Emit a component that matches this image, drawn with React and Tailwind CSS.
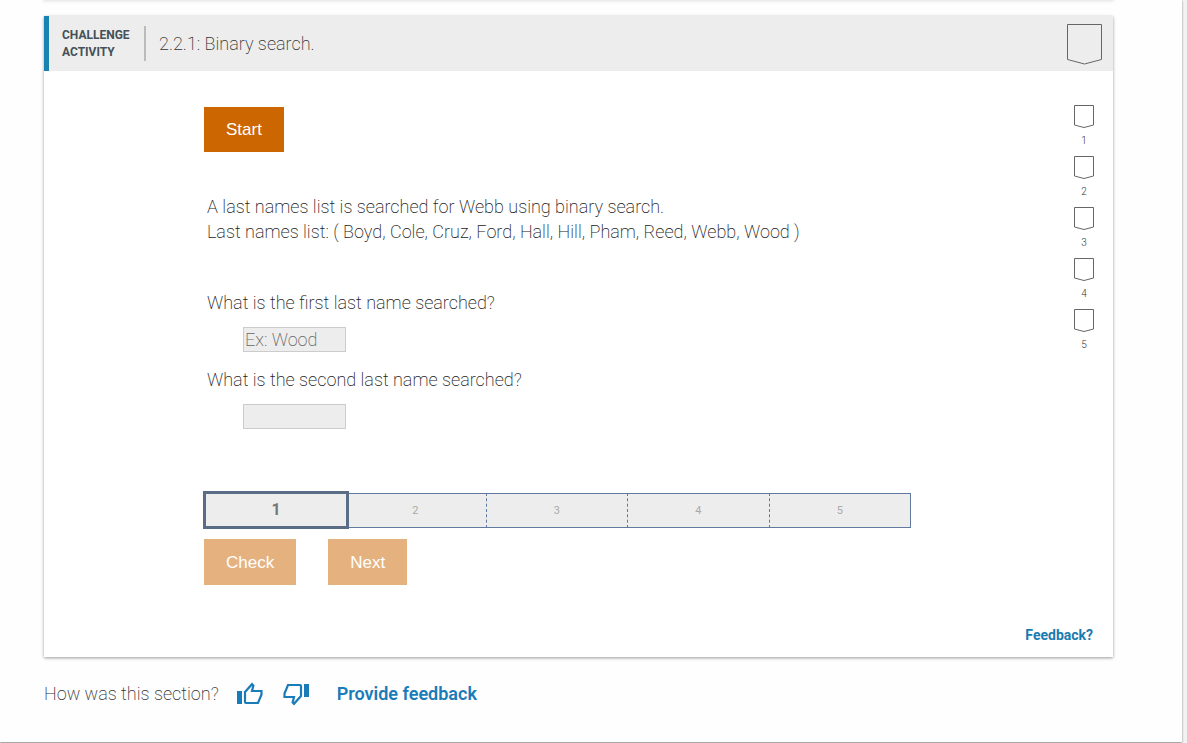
import { useState } from "react";

const LEVELS = [1, 2, 3, 4, 5];

function LargeBadge() {
  return (
    <svg className="h-[42px] w-[35px]" viewBox="0 0 35 42" fill="none" stroke="#666" aria-hidden="true">
      <path d="M.5 1.5H34.500V36.500L17.500 41L.5 36.500Z" />
    </svg>
  );
}

function SmallBadge() {
  return (
    <svg className="h-6 w-5" viewBox="0 0 20 24" fill="none" stroke="#666" aria-hidden="true">
      <path d="M.5 .5H19.500V20L10 22.500L.5 20Z" />
    </svg>
  );
}

function Thumb({ className }) {
  return (
    <svg className={className} viewBox="0 0 26 24" aria-hidden="true">
      <path d="M0 9H5V22H0Z" fill="currentColor" />
      <path
        d="M8 10L15 2.200L16.400 3.600L15 9H24.500V12.500L21 21H9Q8 21 8 20Z"
        fill="none"
        stroke="currentColor"
        strokeWidth="2.200"
      />
    </svg>
  );
}

function Question({ id, label, placeholder }) {
  const [value, setValue] = useState("");
  return (
    <div className="flex flex-col">
      <label htmlFor={id} className="pl-[3px]">
        {label}
      </label>
      <input
        id={id}
        type="text"
        value={value}
        placeholder={placeholder}
        onChange={(event) => setValue(event.target.value)}
        className="mt-3 ml-[39px] h-[25px] w-[103px] border border-[#ccc] bg-[#ededed] px-px placeholder:text-[#666]"
      />
    </div>
  );
}

function Progress({ current }) {
  return (
    <ol className="-ml-px flex max-w-[708px] items-center text-center">
      {LEVELS.map((level) =>
        level === current ? (
          <li
            key={level}
            aria-current="step"
            className="z-10 -mr-1 flex h-[38px] w-[146px] items-center justify-center border-3 border-[#5b6c87] bg-[#ededed] text-base font-bold text-[#777]"
          >
            {level}
          </li>
        ) : (
          <li
            key={level}
            className="flex h-[35px] flex-1 items-center justify-center border-y border-r border-y-[#5f7a9e] border-r-[#5f7a9e] bg-[#ededed] text-[11px] font-normal text-[#aaa] [border-right-style:dashed] last:[border-right-style:solid]"
          >
            {level}
          </li>
        )
      )}
    </ol>
  );
}

export default function App() {
  return (
    <div className="min-h-screen bg-[#f2f2f2] pr-[5px] pb-[2px] font-['Roboto',sans-serif] text-lg leading-[25px] font-extralight text-[#222]">
      <main className="bg-[#fefefe] pr-[69px] pb-9 pl-11 shadow-[0_1px_2px_rgba(0,0,0,0.45)]">
        <div className="flex flex-col gap-4">
          <div className="h-0 shadow-[0_0_3px_1px_rgba(0,0,0,0.15)]" />
          <section className="bg-white shadow-[0_1px_3px_rgba(0,0,0,0.4)]">
            <header className="flex h-[55px] items-center border-l-5 border-[#1a82b0] bg-[#ededed] pr-[11px] pl-[13px]">
              <p className="w-[82px] text-xs leading-[17px] font-bold text-[#455058]">
                CHALLENGE ACTIVITY
              </p>
              <h1 className="flex h-[35px] flex-1 items-center border-l-2 border-[#bbb] pl-[13px] text-[#333]">
                2.2.1: Binary search.
              </h1>
              <LargeBadge />
            </header>

            <div className="flex justify-between pr-[19px] pl-40">
              <div className="flex-1 pt-9">
                <button type="button" className="h-[45px] bg-[#cc6600] px-[22px] font-['Liberation_Sans',sans-serif] text-[17px] font-normal text-white">
                  Start
                </button>
                <p className="mt-[42px] pl-[3px]">
                  A last names list is searched for Webb using binary search.
                  <br />
                  Last names list: ( Boyd, Cole, Cruz, Ford, Hall, Hill, Pham, Reed, Webb, Wood )
                </p>
                <div className="mt-[46px] mb-[62px] flex flex-col gap-[15px]">
                  <Question id="first-name" label="What is the first last name searched?" placeholder="Ex: Wood" />
                  <Question id="second-name" label="What is the second last name searched?" />
                </div>
                <Progress current={1} />
                <div className="mt-[10px] flex gap-8 font-['Liberation_Sans',sans-serif] text-[17px] text-white">
                  <button type="button" className="h-[46px] bg-[#e5b27f] px-[22px] font-normal">
                    Check
                  </button>
                  <button type="button" className="h-[46px] bg-[#e5b27f] px-[22px] font-normal">
                    Next
                  </button>
                </div>
              </div>
              <ol className="flex flex-col gap-[9px] pt-[34px]">
                {LEVELS.map((level) => (
                  <li key={level} className="flex flex-col items-center gap-[6px] text-[10px] leading-3 font-light text-[#333]">
                    <SmallBadge />
                    {level}
                  </li>
                ))}
              </ol>
            </div>

            <div className="flex justify-end pt-[38px] pr-5 pb-[9px]">
              <a href="#feedback" className="text-sm leading-[25px] font-bold text-[#1a7bb0]">
                Feedback?
              </a>
            </div>
          </section>
        </div>

        <footer className="mt-6 flex items-center">
          <span className="text-[#333]">How was this section?</span>
          <button type="button" aria-label="Thumbs up" className="ml-[18px] text-[#1a7bb9]">
            <Thumb className="h-6 w-[26px]" />
          </button>
          <button type="button" aria-label="Thumbs down" className="ml-5 text-[#1a7bb9]">
            <Thumb className="h-6 w-[26px] rotate-180" />
          </button>
          <a href="#provide-feedback" className="ml-7 font-semibold text-[#1a7bb9]">
            Provide feedback
          </a>
        </footer>
      </main>
    </div>
  );
}
